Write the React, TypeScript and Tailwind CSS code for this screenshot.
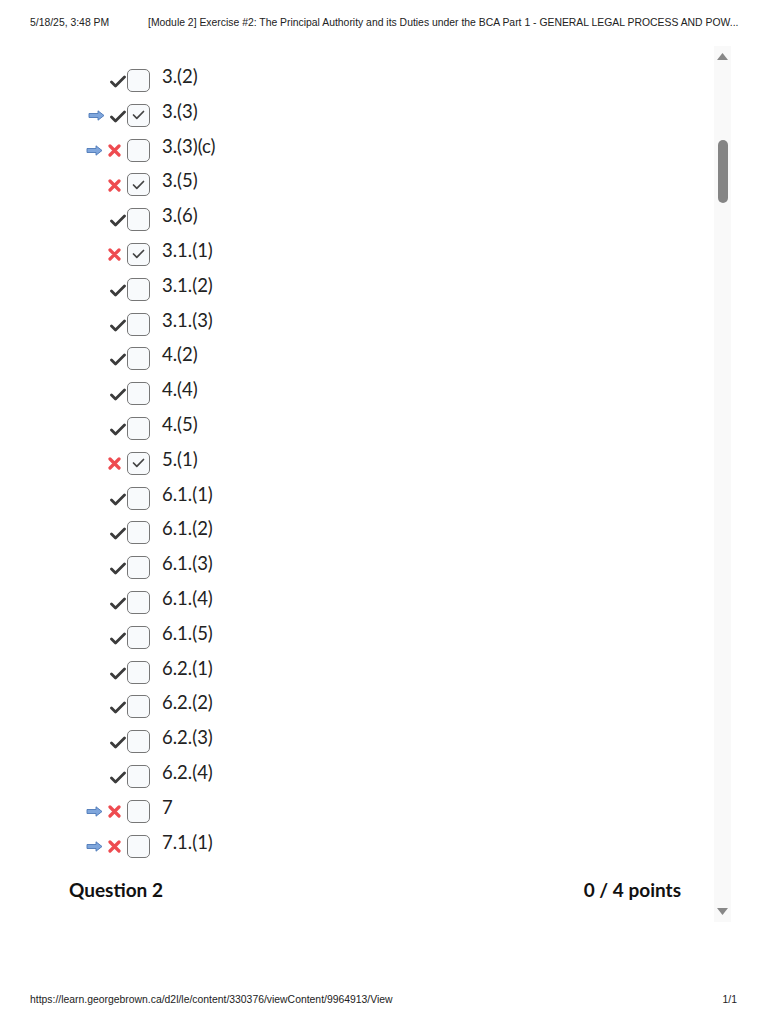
type Row = { label: string; ok: boolean; checked: boolean; arrow?: boolean };

const rows: Row[] = [
  { label: "3.(2)", ok: true, checked: false },
  { label: "3.(3)", ok: true, checked: true, arrow: true },
  { label: "3.(3)(c)", ok: false, checked: false, arrow: true },
  { label: "3.(5)", ok: false, checked: true },
  { label: "3.(6)", ok: true, checked: false },
  { label: "3.1.(1)", ok: false, checked: true },
  { label: "3.1.(2)", ok: true, checked: false },
  { label: "3.1.(3)", ok: true, checked: false },
  { label: "4.(2)", ok: true, checked: false },
  { label: "4.(4)", ok: true, checked: false },
  { label: "4.(5)", ok: true, checked: false },
  { label: "5.(1)", ok: false, checked: true },
  { label: "6.1.(1)", ok: true, checked: false },
  { label: "6.1.(2)", ok: true, checked: false },
  { label: "6.1.(3)", ok: true, checked: false },
  { label: "6.1.(4)", ok: true, checked: false },
  { label: "6.1.(5)", ok: true, checked: false },
  { label: "6.2.(1)", ok: true, checked: false },
  { label: "6.2.(2)", ok: true, checked: false },
  { label: "6.2.(3)", ok: true, checked: false },
  { label: "6.2.(4)", ok: true, checked: false },
  { label: "7", ok: false, checked: false, arrow: true },
  { label: "7.1.(1)", ok: false, checked: false, arrow: true },
];

function Arrow() {
  return (
    <svg width="17" height="11" viewBox="0 0 17 11" className="block">
      <path
        d="M1 3.5 H10 V0.8 L16 5.5 L10 10.2 V7.5 H1 Z"
        fill="#7fa6dc"
        stroke="#4d78b8"
        strokeWidth="0.9"
        strokeLinejoin="round"
      />
    </svg>
  );
}

function CheckMark() {
  return (
    <svg width="16" height="13" viewBox="0 0 16 13" className="block">
      <path d="M1.5 7 L5.5 11 L14.5 2" fill="none" stroke="#3b3b3b" strokeWidth="2.8" strokeLinecap="round" strokeLinejoin="round" />
    </svg>
  );
}

function Cross() {
  return (
    <svg width="13" height="13" viewBox="0 0 13 13" className="block">
      <path d="M2 2 L11 11 M11 2 L2 11" fill="none" stroke="#ee4b50" strokeWidth="3.2" strokeLinecap="round" />
    </svg>
  );
}

function Box({ checked }: { checked: boolean }) {
  return (
    <div className="w-[23px] h-[23px] rounded-[5px] border-[1.5px] border-[#777] bg-[#f8fafc] flex items-center justify-center shrink-0">
      {checked && (
        <svg width="13" height="10" viewBox="0 0 13 10" className="block">
          <path d="M1.5 5 L4.8 8.3 L11.5 1.5" fill="none" stroke="#444" strokeWidth="1.7" strokeLinecap="round" strokeLinejoin="round" />
        </svg>
      )}
    </div>
  );
}

export default function App() {
  return (
    <div className="w-[768px] h-[1024px] bg-white flex flex-col overflow-hidden">
      {/* print header */}
      <div className="flex items-center h-[46px] pl-[30px] text-[10.4px] text-[#222] font-['Liberation_Sans',Arial,sans-serif]">
        <span className="w-[118px]">5/18/25, 3:48 PM</span>
        <span>[Module 2] Exercise #2: The Principal Authority and its Duties under the BCA Part 1 - GENERAL LEGAL PROCESS AND POW...</span>
      </div>

      <div className="flex h-[876px]">
        {/* content */}
        <div className="flex-1 flex flex-col pt-[16px] font-['Lato',sans-serif] text-[#222]">
          {rows.map((r) => (
            <div key={r.label} className="flex items-start h-[34.8px]">
              <div className="w-[127px] flex items-center justify-end h-[23px] mt-[7px] gap-[5px] pr-[1px]">
                {r.arrow && <Arrow />}
                {r.ok ? (
                  <div className="mt-[2px]">
                    <CheckMark />
                  </div>
                ) : (
                  <div className="mr-[5px] mt-[1px]">
                    <Cross />
                  </div>
                )}
              </div>
              <div className="mt-[7px]">
                <Box checked={r.checked} />
              </div>
              <span className="ml-[12px] text-[18.5px] leading-[28px]">{r.label}</span>
            </div>
          ))}

          <div className="flex items-center justify-between pl-[69px] pr-[33px] mt-[14px] text-[19px] leading-[28px] font-bold text-[#111]">
            <span>Question 2</span>
            <span>0 / 4 points</span>
          </div>
        </div>

        {/* scrollbar */}
        <div className="w-[17px] mr-[37px] bg-[#f9f9f9] flex flex-col items-center pt-[7px] pb-[7px]">
          <svg width="11" height="7" viewBox="0 0 11 7" className="block">
            <path d="M5.5 0 L11 7 H0 Z" fill="#888" />
          </svg>
          <div className="w-[10px] h-[63px] rounded-full bg-[#858585] mt-[80px]" />
          <div className="flex-1" />
          <svg width="11" height="7" viewBox="0 0 11 7" className="block">
            <path d="M0 0 H11 L5.5 7 Z" fill="#888" />
          </svg>
        </div>
      </div>

      {/* print footer */}
      <div className="flex-1 flex items-center justify-between pl-[30px] pr-[31px] pt-[54px] text-[10.4px] text-[#222] font-['Liberation_Sans',Arial,sans-serif]">
        <span>https://learn.georgebrown.ca/d2l/le/content/330376/viewContent/9964913/View</span>
        <span>1/1</span>
      </div>
    </div>
  );
}
